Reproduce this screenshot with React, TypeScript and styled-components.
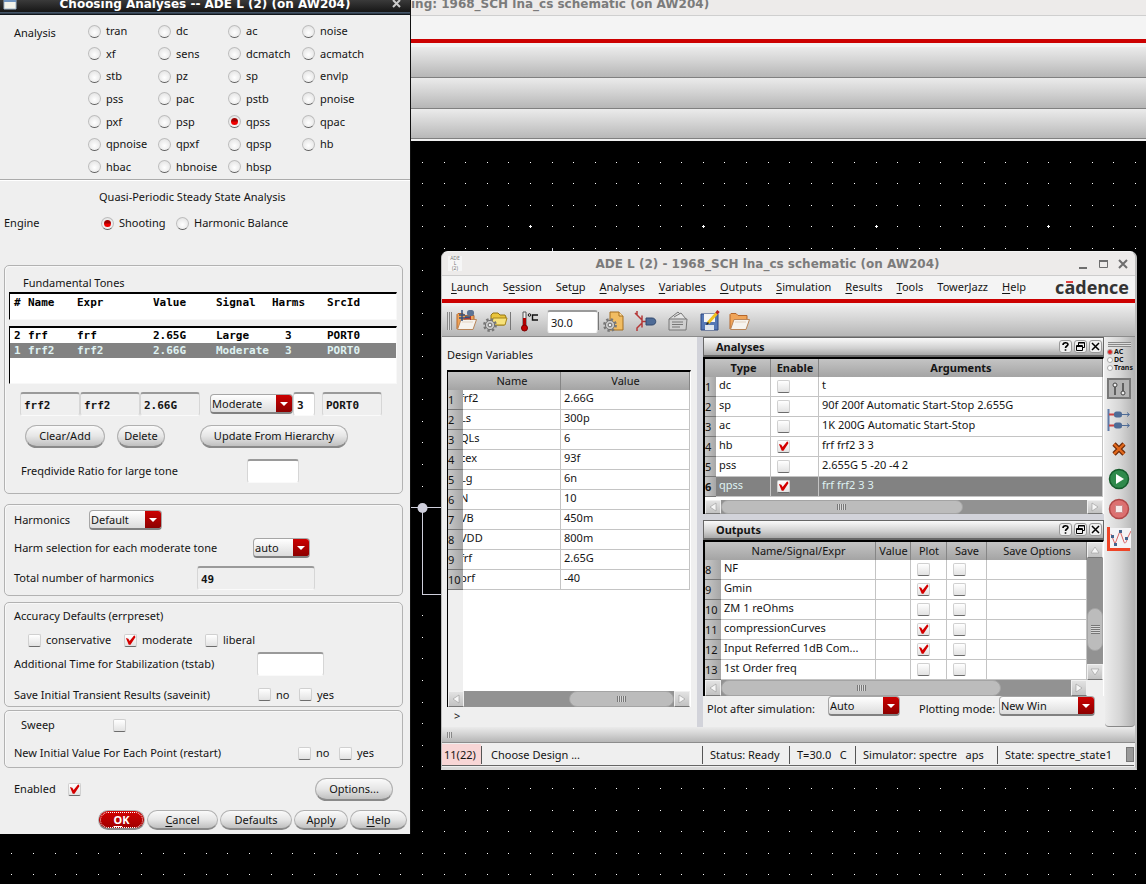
import React from "react";
import styled, { createGlobalStyle, css } from "styled-components";

const SANS = '"Noto Sans", "Open Sans", sans-serif';
const MONO = '"DejaVu Sans Mono", monospace';
const TITLE = '"DejaVu Sans", sans-serif';
const RED = "#cc0000";
const steel = "linear-gradient(#ebebeb, #d4d4d4 45%, #b6b6b6)";

const GlobalStyle = createGlobalStyle`
  * { box-sizing: border-box; }
  html, body { margin: 0; background: #000; }
  body { font: 11px/16px ${SANS}; color: #141414; }
  button, input, select { font: inherit; color: inherit; margin: 0; }
  table { border-collapse: separate; border-spacing: 0; table-layout: fixed; }
  th, td { padding: 0; text-align: left; white-space: nowrap; overflow: hidden; }
  u { text-underline-offset: 2px; }
`;

/* ---------- desktop ---------- */

const Desktop = styled.main`
  position: relative;
  min-height: 100vh;
  overflow: hidden;
  background: #000;
`;
const Canvas = styled.svg`
  position: absolute;
  inset: 0;
  width: 100%;
  height: 100%;
`;

/* ---------- shared controls ---------- */

const Check = styled.input.attrs({ type: "checkbox" })`
  appearance: none;
  flex: none;
  display: block;
  width: 13px;
  height: 13px;
  border-radius: 2px;
  border: 1px solid #d0d0d0;
  border-bottom-color: #6c6c6c;
  background: linear-gradient(#ffffff, #e2e2e2);
  &:checked::after {
    content: "";
    display: block;
    width: 11px;
    height: 11px;
    background: #d40000;
    clip-path: polygon(8% 32%, 30% 38%, 42% 60%, 84% 6%, 96% 22%, 50% 94%, 34% 94%);
  }
`;
const Radio = styled.input.attrs({ type: "radio" })`
  appearance: none;
  flex: none;
  display: block;
  width: 13px;
  height: 13px;
  border-radius: 50%;
  border: 1px solid #bdbdbd;
  border-bottom-color: #5c5c5c;
  background: radial-gradient(circle at 50% 60%, #ffffff, #dedede);
  &:checked::after {
    content: "";
    display: block;
    width: 7px;
    height: 7px;
    margin: 2px;
    border-radius: 50%;
    background: linear-gradient(#a00000 40%, #f00000 60%);
  }
`;
const Choice = styled.label`
  display: flex;
  align-items: center;
  gap: 5px;
  white-space: nowrap;
`;
const Button = styled.button<{ $primary?: boolean; $tall?: boolean }>`
  height: ${(p) => (p.$tall ? 23 : 20)}px;
  padding: 0;
  border: 1px solid #b0b0b0;
  border-bottom: 2px solid #8a8a8a;
  border-radius: 12px;
  background: linear-gradient(#fafafa, #e6e6e6 50%, #c0c0c0);
  line-height: 16px;
  text-align: center;
  white-space: nowrap;
  ${(p) =>
    p.$primary &&
    css`
      background: linear-gradient(#d20000, #a00000);
      color: #fff;
      font-weight: 700;
      outline: 1px dotted #fff;
      outline-offset: -3px;
    `}
`;
const Field = styled.input.attrs({ type: "text" })<{ $flat?: boolean; $mono?: boolean }>`
  width: 100%;
  min-width: 0;
  height: 24px;
  padding: 1px 3px 0;
  border: 1px solid #d6d6d6;
  border-top: 2px solid #9a9a9a;
  border-bottom-color: #fafafa;
  border-radius: 3px;
  background: ${(p) => (p.$flat ? "#efefef" : "#fff")};
  ${(p) => p.$mono && `font: 700 11px/16px ${MONO};`}
`;
const Combo = styled.span`
  position: relative;
  display: block;
  height: 20px;
  border: 1px solid #a6a6a6;
  border-bottom: 2px solid #808080;
  border-radius: 4px;
  overflow: hidden;
  background: linear-gradient(#ffffff, #dcdcdc);
  select {
    appearance: none;
    display: block;
    width: 100%;
    height: 17px;
    padding: 0 17px 0 1px;
    border: 0;
    background: transparent;
    line-height: 16px;
  }
  svg {
    position: absolute;
    top: 0;
    right: 0;
    pointer-events: none;
    background: linear-gradient(${RED}, #8c0000);
  }
`;
function Dropdown({ value, label }: { value: string; label: string }) {
  return (
    <Combo>
      <select aria-label={label} defaultValue={value}>
        <option>{value}</option>
      </select>
      <svg width="16" height="17" viewBox="0 0 16 17">
        <path d="M4 7h8l-4 4z" fill="#fff" />
      </svg>
    </Combo>
  );
}

/* ---------- schematic window behind ---------- */

const Schematic = styled.section`
  margin-left: 411px;
  position: relative;
`;
const SchematicTitle = styled.h2`
  margin: 0;
  height: 16px;
  overflow: hidden;
  background: #edebea;
  border-bottom: 1px solid #cfcfcf;
  font: 700 12px/8px ${TITLE};
  color: #7b7b7b;
  white-space: nowrap;
`;
const SchematicMenu = styled.div`
  height: 31px;
  background: #f4f4f4;
  border-bottom: 4px solid #f2f2f2;
  box-shadow: inset 0 -4px ${RED};
`;
const Band = styled.div`
  height: 31px;
  background: ${steel};
  border-bottom: 1px solid #808080;
  &:last-child {
    border-bottom: 2px solid #f0f0f0;
    box-shadow: inset 0 -1px #808080;
    height: 32px;
  }
`;

/* ---------- analyses dialog ---------- */

const Dialog = styled.section`
  position: absolute;
  top: 0;
  left: 0;
  width: 411px;
  background: #efefef;
  border-right: 1px solid #111;
`;
const DialogTitle = styled.header`
  display: grid;
  grid-template-columns: 22px 1fr 22px;
  align-items: start;
  height: 15px;
  padding: 0 3px;
  overflow: hidden;
  background: linear-gradient(#3a3a3a, #161616 80%, #4d6178 84%, #000);
  color: #fff;
  h1 {
    margin: 0;
    font: 700 12px/8px ${TITLE};
    text-align: center;
    white-space: nowrap;
  }
`;
const AnalysisArea = styled.fieldset`
  margin: 0;
  border: 0;
  display: grid;
  grid-template-columns: 74px 1fr;
  padding: 5px 0 1px 14px;
  border-bottom: 1px solid #ababab;
  box-shadow: 0 1px #fff;
  > span { padding-top: 5px; }
`;
const AnalysisGrid = styled.div`
  display: grid;
  grid-template-columns: 70px 70px 74px 1fr;
  grid-template-rows: repeat(7, 1fr);
  height: 158px;
  ${Choice} { align-self: center; }
`;
const EngineArea = styled.fieldset`
  margin: 0;
  border: 0;
  padding: 9px 0 34px 4px;
`;
const EngineTitle = styled.div`
  padding-left: 95px;
  margin-bottom: 10px;
`;
const EngineRow = styled.div`
  display: grid;
  grid-template-columns: 97px 75px 1fr;
  align-items: center;
`;
const Group = styled.section<{ $h: number; $gap: number }>`
  margin: 0 7px ${(p) => p.$gap}px 4px;
  min-height: ${(p) => p.$h}px;
  border: 1px solid #b2b2b2;
  border-radius: 5px;
  box-shadow: inset 1px 1px #f8f8f8;
`;
const Row = styled.div<{ $cols: string; $h: number; $x?: number; $top?: number }>`
  display: grid;
  grid-template-columns: ${(p) => p.$cols};
  align-items: center;
  min-height: ${(p) => p.$h}px;
  padding-left: ${(p) => p.$x ?? 9}px;
  padding-top: ${(p) => p.$top ?? 0}px;
  white-space: nowrap;
`;
const Legend = styled.div`
  padding: 9px 0 1px 18px;
`;
const ListBox = styled.div<{ $h: number }>`
  height: ${(p) => p.$h}px;
  margin: 0 5px 6px 4px;
  border: 1px solid #f8f8f8;
  border-top: 2px solid #000;
  border-left: 1px solid #000;
  background: #fff;
  table {
    width: 100%;
    font: 700 11px/15px ${MONO};
    color: #000;
  }
  th, td { overflow: visible; padding-top: 0; }
`;
const ToneHead = styled.tr`
  th { line-height: 18px; }
  th:first-child { padding-left: 4px; }
`;
const ToneRow = styled.tr<{ $on?: boolean }>`
  ${(p) => p.$on && "background: #828282; color: #dff2f2;"}
  td { height: 15px; }
  td:first-child { padding-left: 4px; }
  td:nth-child(6) { padding-left: 13px; }
`;
const Actions = styled.div`
  display: grid;
  grid-template-columns: 47px 71px 72px 54px 57px;
  gap: 2px;
  justify-content: end;
  padding: 9px 3px 4px 0;
`;

function ToneCols() {
  return (
    <colgroup>
      {[18, 49, 76, 63, 56, 55].map((w, i) => (
        <col key={i} style={{ width: w }} />
      ))}
      <col />
    </colgroup>
  );
}

const analyses = [
  "tran", "dc", "ac", "noise", "xf", "sens", "dcmatch", "acmatch", "stb", "pz", "sp", "envlp",
  "pss", "pac", "pstb", "pnoise", "pxf", "psp", "qpss", "qpac", "qpnoise", "qpxf", "qpsp", "hb",
  "hbac", "hbnoise", "hbsp",
];

function AnalysesDialog() {
  return (
    <Dialog aria-label="Choosing Analyses">
      <DialogTitle>
        <svg width="14" height="10" viewBox="0 0 14 10">
          <path d="M1 0h12v9H1z" fill="#f2f2ea" stroke="#9db4cc" />
          <path d="M1 0h12v2H1z" fill="#6f94c0" />
        </svg>
        <h1>Choosing Analyses -- ADE L (2) (on AW204)</h1>
        <svg width="22" height="10" viewBox="0 0 22 10">
          <path d="M8 0l7 7M15 0l-7 7" stroke="#ccc" strokeWidth="2" />
        </svg>
      </DialogTitle>

      <AnalysisArea>
        <span>Analysis</span>
        <AnalysisGrid>
          {analyses.map((a) => (
            <Choice key={a}>
              <Radio name="analysis" defaultChecked={a === "qpss"} />
              {a}
            </Choice>
          ))}
        </AnalysisGrid>
      </AnalysisArea>

      <EngineArea>
        <EngineTitle>Quasi-Periodic Steady State Analysis</EngineTitle>
        <EngineRow>
          <span>Engine</span>
          <Choice>
            <Radio name="engine" defaultChecked />
            Shooting
          </Choice>
          <Choice>
            <Radio name="engine" />
            Harmonic Balance
          </Choice>
        </EngineRow>
      </EngineArea>

      <Group $h={229} $gap={10}>
        <Legend>Fundamental Tones</Legend>
        <ListBox $h={28}>
          <table>
            <ToneCols />
            <thead>
              <ToneHead>
                <th>#</th>
                <th>Name</th>
                <th>Expr</th>
                <th>Value</th>
                <th>Signal</th>
                <th>Harms</th>
                <th>SrcId</th>
              </ToneHead>
            </thead>
          </table>
        </ListBox>
        <ListBox $h={58}>
          <table>
            <ToneCols />
            <tbody>
              <ToneRow>
                <td>2</td><td>frf</td><td>frf</td><td>2.65G</td><td>Large</td><td>3</td><td>PORT0</td>
              </ToneRow>
              <ToneRow $on>
                <td>1</td><td>frf2</td><td>frf2</td><td>2.66G</td><td>Moderate</td><td>3</td><td>PORT0</td>
              </ToneRow>
            </tbody>
          </table>
        </ListBox>
        <Row $h={28} $x={15} $cols="60px 60px 60px 10px 83px 22px 7px 60px">
          <Field $flat $mono aria-label="Name" defaultValue="frf2" />
          <Field $flat $mono aria-label="Expr" defaultValue="frf2" />
          <Field $flat $mono aria-label="Value" defaultValue="2.66G" />
          <span />
          <Dropdown label="Signal" value="Moderate" />
          <Field $mono aria-label="Harms" defaultValue="3" />
          <span />
          <Field $flat $mono aria-label="SrcId" defaultValue="PORT0" />
        </Row>
        <Row $h={36} $x={20} $cols="80px 12px 48px 35px 148px">
          <Button $tall>Clear/Add</Button>
          <span />
          <Button $tall>Delete</Button>
          <span />
          <Button $tall>Update From Hierarchy</Button>
        </Row>
        <Row $h={34} $x={16} $cols="226px 52px">
          <label htmlFor="ratio">Freqdivide Ratio for large tone</label>
          <Field id="ratio" />
        </Row>
      </Group>

      <Group $h={92} $gap={6}>
        <Row $h={30} $cols="75px 73px">
          <span>Harmonics</span>
          <Dropdown label="Harmonics" value="Default" />
        </Row>
        <Row $h={26} $cols="239px 57px">
          <span>Harm selection for each moderate tone</span>
          <Dropdown label="Harm selection" value="auto" />
        </Row>
        <Row $h={34} $cols="183px 118px">
          <label htmlFor="total">Total number of harmonics</label>
          <Field id="total" $flat $mono defaultValue="49" />
        </Row>
      </Group>

      <Group $h={105} $gap={3}>
        <Row $h={26} $cols="1fr">Accuracy Defaults (errpreset)</Row>
        <Row $h={22} $x={23} $cols="96px 81px 1fr">
          <Choice><Check />conservative</Choice>
          <Choice><Check defaultChecked />moderate</Choice>
          <Choice><Check />liberal</Choice>
        </Row>
        <Row $h={26} $cols="243px 67px">
          <label htmlFor="tstab">Additional Time for Stabilization (tstab)</label>
          <Field id="tstab" />
        </Row>
        <Row $h={29} $top={6} $cols="244px 41px 1fr">
          <span>Save Initial Transient Results (saveinit)</span>
          <Choice><Check />no</Choice>
          <Choice><Check />yes</Choice>
        </Row>
      </Group>

      <Group $h={58} $gap={9}>
        <Row $h={28} $x={16} $cols="92px 13px">
          <label htmlFor="sweep">Sweep</label>
          <Check id="sweep" />
        </Row>
        <Row $h={28} $cols="284px 41px 1fr">
          <span>New Initial Value For Each Point (restart)</span>
          <Choice><Check />no</Choice>
          <Choice><Check />yes</Choice>
        </Row>
      </Group>

      <Row $h={24} $x={14} $cols="54px 13px 1fr 78px 17px">
        <label htmlFor="enabled">Enabled</label>
        <Check id="enabled" defaultChecked />
        <span />
        <Button $tall>Options...</Button>
      </Row>
      <Actions>
        <Button $primary><u>O</u>K</Button>
        <Button><u>C</u>ancel</Button>
        <Button>Defaults</Button>
        <Button>Apply</Button>
        <Button><u>H</u>elp</Button>
      </Actions>
    </Dialog>
  );
}

/* ---------- ADE window ---------- */

const Ade = styled.section`
  position: absolute;
  top: 251px;
  left: 441px;
  right: 9px;
  border: 1px solid #b4b4b4;
  border-width: 1px 2px 3px 1px;
  border-color: #f4f4f4 #bdbdbd #d8d8d8;
  border-radius: 7px 7px 0 0;
  background: #efefef;
  overflow: hidden;
`;
const AdeTitle = styled.header`
  display: grid;
  grid-template-columns: 22px 1fr 64px;
  align-items: center;
  height: 24px;
  background: #edebea;
  border-bottom: 1px solid #cdcdcd;
  h2 {
    margin: 0;
    font: 700 12px/16px ${TITLE};
    color: #7b7b7b;
    text-align: center;
    white-space: nowrap;
  }
`;
const AdeBadge = styled.span`
  width: 14px;
  margin-left: 6px;
  background: #f6f6f6;
  font: 5px/5px ${SANS};
  color: #777;
  text-align: center;
`;
const MenuBar = styled.nav`
  display: flex;
  align-items: center;
  gap: 14px;
  height: 27px;
  padding: 0 6px 1px 9px;
  background: #f4f4f4;
  border-bottom: 4px solid ${RED};
  a { color: inherit; text-decoration: none; }
`;
const Logo = styled.span`
  margin-left: auto;
  font: 700 18px/18px "Open Sans", ${SANS};
  color: #333;
  i { position: relative; font-style: normal; }
  i::before {
    content: "";
    position: absolute;
    left: 2px;
    right: 2px;
    top: 6px;
    height: 2px;
    background: #e04040;
  }
`;
const ToolBar = styled.div`
  display: flex;
  align-items: center;
  height: 31px;
  margin-top: 3px;
  padding-left: 5px;
  background: ${steel};
  border-bottom: 1px solid #8c8c8c;
`;
const Tool = styled.button<{ $w: number }>`
  flex: none;
  display: grid;
  place-items: center;
  width: ${(p) => p.$w}px;
  height: 26px;
  padding: 0;
  border: 0;
  background: none;
`;
const Sep = styled.span`
  width: 1px;
  height: 18px;
  background: #777;
`;
const Grip = styled.span<{ $vertical?: boolean }>`
  width: ${(p) => (p.$vertical ? 23 : 5)}px;
  height: ${(p) => (p.$vertical ? 5 : 18)}px;
  background: repeating-linear-gradient(
    ${(p) => (p.$vertical ? "180deg" : "90deg")},
    #888 0 1px,
    #ddd 1px 2px
  );
`;
const TempField = styled(Field)`
  width: 51px;
  height: 23px;
`;
const AdeBody = styled.div`
  display: grid;
  grid-template-columns: 255px 6px minmax(0, 1fr) 31px;
  height: 390px;
`;
const Splitter = styled.div`
  background: #d2d3da;
`;
const VarPane = styled.div`
  padding: 10px 6px 0 5px;
`;
const Sunken = styled.div<{ $h: number }>`
  display: flex;
  flex-direction: column;
  height: ${(p) => p.$h}px;
  border-top: 2px solid #000;
  border-left: 2px solid #000;
  border-right: 1px solid #fff;
  background: #fff;
`;
const VarBox = styled(Sunken)`
  margin-top: 7px;
  border-left-width: 1px;
`;
const Grow = styled.div<{ $stub?: number }>`
  flex: 1;
  min-height: 0;
  background: linear-gradient(90deg, #efefef ${(p) => p.$stub ?? 0}px, #fff 0);
`;
const Sheet = styled.table<{ $bold?: boolean }>`
  width: 100%;
  thead th {
    height: 18px;
    background: linear-gradient(#c4c4c4, #a4a4a4);
    box-shadow: inset -1px 0 #858585;
    text-align: center;
    line-height: 16px;
    font-weight: ${(p) => (p.$bold ? 700 : 400)};
  }
  thead th:first-child { box-shadow: none; }
  tbody td {
    height: 20px;
    padding: 0 2px 3px 3px;
    border-right: 1px solid #c4c4c4;
    border-bottom: 1px solid #c4c4c4;
    line-height: 16px;
  }
  tbody th {
    height: 20px;
    padding: 1px 0 0;
    background: linear-gradient(90deg, #c8c8c8, #a6a6a6);
    border-bottom: 1px solid #777;
    font-weight: 400;
    line-height: 16px;
  }
  tbody td input { margin: 2px 0 0 3px; }
`;
const SheetRow = styled.tr<{ $on?: boolean }>`
  ${(p) => p.$on && "td { background: #828282; color: #dff2f2; } && th { font-weight: 700; }"}
`;
const Clipped = styled.span`
  display: block;
  margin-left: -6px;
`;
const Prompt = styled.div`
  padding: 1px 7px;
`;
const HBar = styled.div<{ $h: number }>`
  flex: none;
  display: grid;
  grid-template-columns: 16px minmax(0, 1fr) 16px;
  height: ${(p) => p.$h}px;
  background: #929292;
`;
const ScrollButton = styled.button`
  display: grid;
  place-items: center;
  padding: 0;
  border: 1px solid #f0f0f0;
  border-bottom-color: #777;
  background: linear-gradient(#e2e2e2, #c2c2c2);
  overflow: hidden;
`;
const Track = styled.div`
  display: flex;
  background: #929292;
`;
const Thumb = styled.span`
  display: grid;
  place-items: center;
  border: 1px solid #a4a4a4;
  border-radius: 8px;
  background: #bcbcbc;
`;
const ThumbGrip = styled.span<{ $vertical?: boolean }>`
  width: 9px;
  height: ${(p) => (p.$vertical ? 9 : 6)}px;
  background: repeating-linear-gradient(
    ${(p) => (p.$vertical ? "180deg" : "90deg")},
    #777 0 1px,
    #d8d8d8 1px 2px
  );
`;

const arrows = {
  left: "M8 1L2 5l6 4z",
  right: "M2 1l6 4-6 4z",
  up: "M1 8L5 2l4 6z",
  down: "M1 2h8L5 8z",
};
function Arrow({ dir }: { dir: keyof typeof arrows }) {
  return (
    <ScrollButton aria-label={`Scroll ${dir}`}>
      <svg width="10" height="10" viewBox="0 0 10 10">
        <path d={arrows[dir]} fill="#f6f6f6" stroke="#999" strokeWidth=".6" />
      </svg>
    </ScrollButton>
  );
}
function ScrollBar({ h, start, size }: { h: number; start: string; size: string }) {
  return (
    <HBar $h={h}>
      <Arrow dir="left" />
      <Track>
        <Thumb style={{ marginLeft: start, width: size }}>
          <ThumbGrip />
        </Thumb>
      </Track>
      <Arrow dir="right" />
    </HBar>
  );
}

const RightPane = styled.div`
  display: flex;
  flex-direction: column;
`;
const PaneTitle = styled.header`
  flex: none;
  display: flex;
  align-items: center;
  gap: 2px;
  height: 20px;
  padding: 0 1px 0 12px;
  border: 1px solid #666;
  border-bottom-width: 2px;
  background: linear-gradient(#fafafa, #d0d0d0 60%, #a8a8a8);
  h3 { margin: 0 auto 0 0; font: 700 11px/16px ${SANS}; }
`;
const PaneButton = styled.button`
  display: grid;
  place-items: center;
  width: 13px;
  height: 13px;
  padding: 0;
  border: 1px solid #999;
  border-radius: 3px;
  background: #f0f0f0;
`;
function PaneHead({ title }: { title: string }) {
  return (
    <PaneTitle>
      <h3>{title}</h3>
      <PaneButton aria-label="Help">
        <svg width="11" height="11" viewBox="0 0 11 11" fill="none" stroke="#000" strokeWidth="1.6">
          <path d="M3 4c0-3 5-3 5-.5C8 5 5.500 5 5.500 7M5.500 8.200v1.600" />
        </svg>
      </PaneButton>
      <PaneButton aria-label="Detach">
        <svg width="11" height="11" viewBox="0 0 11 11" fill="none" stroke="#000">
          <path d="M3.500 4V1.500h6v5H7.500M3.500 2h6M1.500 4.500h6v5h-6zM1.500 5.500h6" />
        </svg>
      </PaneButton>
      <PaneButton aria-label="Close">
        <svg width="11" height="11" viewBox="0 0 11 11" fill="none" stroke="#000" strokeWidth="1.500">
          <path d="M2 2l7 7M9 2l-7 7" />
        </svg>
      </PaneButton>
    </PaneTitle>
  );
}
const VSplit = styled.div`
  flex: none;
  height: 6px;
  background: #d2d3da;
`;
const OutputsArea = styled.div`
  display: grid;
  grid-template-columns: minmax(0, 1fr) 16px;
`;
const VBar = styled.div`
  display: grid;
  grid-template-rows: 16px 1fr 16px;
  background: #929292;
`;
const VTrack = styled.div`
  display: flex;
  flex-direction: column;
  ${Thumb} { height: 43px; margin-top: 50px; }
`;
const Corner = styled.div`
  display: grid;
  grid-template-columns: minmax(0, 1fr) 16px;
  background: #efefef;
`;
const PlotRow = styled.div`
  display: grid;
  grid-template-columns: 121px 72px 1fr 80px 96px 9px;
  padding-left: 4px;
  white-space: nowrap;
  > span:not(${Combo}) { padding-top: 5px; }
`;
const SideBar = styled.aside`
  display: flex;
  flex-direction: column;
  align-items: center;
  padding: 5px 2px 0 0;
  margin-left: 1px;
  border-bottom: 1px solid #888;
  border-radius: 0 0 4px 4px;
  background: linear-gradient(90deg, #ececec, #d6d6d6 50%, #b2b2b2);
`;
const ModeKeys = styled.div`
  margin-top: 1px;
  align-self: stretch;
  padding-left: 2px;
  font: 700 7px/8px ${SANS};
  div { display: flex; align-items: center; gap: 1px; height: 8px; }
`;
const ModeDot = styled.span<{ $on?: boolean }>`
  width: 6px;
  height: 6px;
  border-radius: 50%;
  border: 1px solid #aaa;
  background: ${(p) => (p.$on ? "#d22" : "#fff")};
`;
const SideTool = styled.button<{ $h: number }>`
  display: grid;
  place-items: center;
  width: 26px;
  height: ${(p) => p.$h}px;
  padding: 0;
  border: 0;
  background: none;
`;
const LowerBar = styled.div`
  display: flex;
  align-items: center;
  height: 16px;
  padding-left: 5px;
  background: ${steel};
  border-bottom: 1px solid #8c8c8c;
  ${Grip} { height: 6px; }
`;
const StatusBar = styled.footer`
  display: grid;
  grid-template-columns: 39px 1fr 87px 66px 142px 129px 8px;
  align-items: center;
  height: 22px;
  margin: 1px 1px 1px 0;
  border-bottom: 1px solid #666;
  white-space: pre;
  span { padding-left: 7px; border-left: 1px solid #555; line-height: 18px; }
  span:first-child { padding-left: 2px; border: 0; background: #f8d6d6; line-height: 21px; }
  span:nth-child(2) { padding-left: 9px; }
  i { height: 15px; background: #999; border: 1px solid #777; }
`;

const Gear = ({ x, y }: { x: number; y: number }) => (
  <g transform={`translate(${x} ${y})`}>
    <circle r="5.600" fill="none" stroke="#777" strokeWidth="2.600" strokeDasharray="2.300 2.100" />
    <circle r="4.600" fill="#c9c9c9" stroke="#707070" />
    <circle r="1.900" fill="#eee" stroke="#666" />
  </g>
);
const OpenFolder = () => (
  <g>
    <path d="M2 19V4.500l1-1h5l2 2h9v4" fill="#f0a458" stroke="#b5662a" />
    <path d="M6 9.500h15.500l-3.500 10H2.500z" fill="#f6f3ee" stroke="#b98558" />
    <path d="M7 12h11" stroke="#e3d3c2" />
  </g>
);
const Ico = ({ children }: { children: React.ReactNode }) => (
  <svg width="23" height="23" viewBox="0 0 23 23" fill="none">
    {children}
  </svg>
);

const menus: [string, string, string][] = [
  ["", "L", "aunch"], ["S", "e", "ssion"], ["Set", "u", "p"], ["", "A", "nalyses"],
  ["", "V", "ariables"], ["", "O", "utputs"], ["", "S", "imulation"], ["", "R", "esults"],
  ["", "T", "ools"], ["TowerJazz", "", ""], ["", "H", "elp"],
];
const variables = [
  ["frf2", "2.66G"], ["Ls", "300p"], ["QLs", "6"], ["cex", "93f"], ["Lg", "6n"],
  ["N", "10"], ["VB", "450m"], ["VDD", "800m"], ["frf", "2.65G"], ["prf", "-40"],
];
const runs: [string, boolean, string][] = [
  ["dc", false, "t"],
  ["sp", false, "90f 200f Automatic Start-Stop 2.655G"],
  ["ac", false, "1K 200G Automatic Start-Stop"],
  ["hb", true, "frf frf2 3 3"],
  ["pss", false, "2.655G 5 -20 -4 2"],
  ["qpss", true, "frf frf2 3 3"],
];
const outputs: [number, string, boolean][] = [
  [8, "NF", false], [9, "Gmin", true], [10, "ZM 1 reOhms", false],
  [11, "compressionCurves", true], [12, "Input Referred 1dB Com...", true], [13, "1st Order freq", false],
];

function AdeWindow() {
  return (
    <Ade aria-label="ADE L">
      <AdeTitle>
        <AdeBadge>ADE<br />L<br />(2)</AdeBadge>
        <h2>ADE L (2) - 1968_SCH lna_cs schematic (on AW204)</h2>
        <svg width="64" height="16" viewBox="0 0 64 16" fill="none" stroke="#6e6e6e" strokeWidth="2">
          <path d="M8 12h8" />
          <path d="M28.500 4.500h8v7h-8z" strokeWidth="1" />
          <path d="M28 5h9" />
          <path d="M48 4l8 8M56 4l-8 8" />
        </svg>
      </AdeTitle>
      <MenuBar>
        {menus.map(([a, k, b]) => (
          <a href="#" key={a + k + b}>
            {a}
            <u>{k}</u>
            {b}
          </a>
        ))}
        <Logo>c<i>a</i>dence</Logo>
      </MenuBar>
      <ToolBar>
        <Grip />
        <Tool $w={28} aria-label="Set up design">
          <Ico>
            <OpenFolder />
            <path d="M7 0v11M4 5h6M4 8h6M10 7h5M7 8h9" stroke="#35507c" strokeWidth="1.500" />
            <rect x="12" y="0" width="7" height="6" rx="2.500" fill="#5d7394" />
            <path d="M15.500 6v4M9 9l7-1" stroke="#a33" />
          </Ico>
        </Tool>
        <Tool $w={30} aria-label="Model libraries">
          <svg width="25" height="23" viewBox="0 0 25 23" fill="none">
            <path d="M8 5l2-2h5l2 2h5l1 2-2 8H8z" fill="#e9c43c" stroke="#927414" />
            <path d="M10 8h14l-2 7H8z" fill="#f7e27a" stroke="#a48318" />
            <Gear x={7} y={15} />
          </svg>
        </Tool>
        <Sep />
        <Tool $w={36} aria-label="Temperature">
          <svg width="20" height="23" viewBox="0 0 20 23" fill="none">
            <path d="M4 2h3v13H4z" fill="#f4f4f4" stroke="#555" />
            <path d="M4 8h3v9H4z" fill="#b10000" />
            <circle cx="5.500" cy="18" r="3" fill="#c40000" stroke="#700" />
            <circle cx="10.500" cy="5" r="1.300" stroke="#111" />
            <path d="M19 5h-5.500v5H19" stroke="#111" strokeWidth="1.400" />
          </svg>
        </Tool>
        <TempField aria-label="Temperature" defaultValue="30.0" />
        <Sep />
        <Tool $w={30} aria-label="Simulation options">
          <Ico>
            <path d="M7 2h9l4 4v14H7z" fill="#f1bd62" stroke="#a46f20" />
            <path d="M16 2v4h4" fill="#fbe0a8" stroke="#a46f20" />
            <Gear x={7} y={15} />
          </Ico>
        </Tool>
        <Tool $w={32} aria-label="Choose analyses">
          <Ico>
            <path d="M3 1v4l5 5v3l-5 5v3M8 5.500v12M8 11.500h5M3 5l-2-2" stroke="#b53838" strokeWidth="1.500" />
            <path d="M12 8h6c5 0 5 7 0 7h-6z" fill="#4e6b96" stroke="#31496e" />
          </Ico>
        </Tool>
        <Tool $w={32} aria-label="Outputs">
          <Ico>
            <path d="M3 9l9-7 6 6" fill="#ddd" stroke="#777" />
            <path d="M8 7l7-4 5 6" fill="#e6e6e6" stroke="#777" />
            <path d="M3 9h18l-1 11H3z" fill="#cfcfcf" stroke="#777" />
            <path d="M6 12h11M6 14.500h11M6 17h8" stroke="#777" />
          </Ico>
        </Tool>
        <Tool $w={32} aria-label="Save state">
          <Ico>
            <path d="M3 4h17v16H3z" fill="#5577b5" stroke="#2c4780" />
            <path d="M6 4h11v8H6z" fill="#f4f4f4" />
            <path d="M7 15h9v5H7z" fill="#dfe5ee" />
            <path d="M10 13l9-10" stroke="#f0c020" strokeWidth="3" />
            <path d="M18.500 3.500l2-2.500" stroke="#b22" strokeWidth="3" />
            <path d="M8.500 14.500l2-2" stroke="#222" strokeWidth="1.500" />
          </Ico>
        </Tool>
        <Tool $w={28} aria-label="Load state">
          <Ico><OpenFolder /></Ico>
        </Tool>
      </ToolBar>

      <AdeBody>
        <VarPane>
          Design Variables
          <VarBox $h={337}>
            <Sheet>
              <colgroup>
                <col style={{ width: 15 }} />
                <col style={{ width: 98 }} />
                <col />
              </colgroup>
              <thead>
                <tr><th /><th>Name</th><th>Value</th></tr>
              </thead>
              <tbody>
                {variables.map(([n, v], i) => (
                  <SheetRow key={n}>
                    <th>{i + 1}</th>
                    <td><Clipped>{n}</Clipped></td>
                    <td>{v}</td>
                  </SheetRow>
                ))}
              </tbody>
            </Sheet>
            <Grow $stub={15} />
            <ScrollBar h={16} start="50%" size="50%" />
          </VarBox>
          <Prompt>&gt;</Prompt>
        </VarPane>
        <Splitter />
        <RightPane>
          <PaneHead title="Analyses" />
          <Sunken $h={157}>
            <Sheet $bold>
              <colgroup>
                <col style={{ width: 11 }} />
                <col style={{ width: 55 }} />
                <col style={{ width: 48 }} />
                <col />
              </colgroup>
              <thead>
                <tr><th /><th>Type</th><th>Enable</th><th>Arguments</th></tr>
              </thead>
              <tbody>
                {runs.map(([n, on, args], i) => (
                  <SheetRow key={n} $on={n === "qpss"}>
                    <th>{i + 1}</th>
                    <td>{n}</td>
                    <td><Check aria-label={`Enable ${n}`} defaultChecked={on} /></td>
                    <td>{args}</td>
                  </SheetRow>
                ))}
              </tbody>
            </Sheet>
            <Grow />
            <ScrollBar h={14} start="0" size="66%" />
          </Sunken>
          <VSplit />
          <PaneHead title="Outputs" />
          <Sunken $h={156}>
            <OutputsArea>
              <Sheet>
                <colgroup>
                  <col style={{ width: 16 }} />
                  <col style={{ width: 155 }} />
                  <col style={{ width: 35 }} />
                  <col style={{ width: 36 }} />
                  <col style={{ width: 40 }} />
                  <col />
                </colgroup>
                <thead>
                  <tr><th /><th>Name/Signal/Expr</th><th>Value</th><th>Plot</th><th>Save</th><th>Save Options</th></tr>
                </thead>
                <tbody>
                  {outputs.map(([i, n, plot]) => (
                    <SheetRow key={n}>
                      <th>{i}</th>
                      <td>{n}</td>
                      <td />
                      <td><Check aria-label={`Plot ${n}`} defaultChecked={plot} /></td>
                      <td><Check aria-label={`Save ${n}`} /></td>
                      <td />
                    </SheetRow>
                  ))}
                </tbody>
              </Sheet>
              <VBar>
                <Arrow dir="up" />
                <VTrack>
                  <Thumb><ThumbGrip $vertical /></Thumb>
                </VTrack>
                <Arrow dir="down" />
              </VBar>
            </OutputsArea>
            <Corner>
              <ScrollBar h={16} start="0" size="80%" />
            </Corner>
          </Sunken>
          <PlotRow>
            <span>Plot after simulation:</span>
            <Dropdown label="Plot after simulation" value="Auto" />
            <span />
            <span>Plotting mode:</span>
            <Dropdown label="Plotting mode" value="New Win" />
          </PlotRow>
        </RightPane>
        <SideBar>
          <Grip $vertical />
          <ModeKeys>
            <div><ModeDot $on />AC</div>
            <div><ModeDot />DC</div>
            <div><ModeDot />Trans</div>
          </ModeKeys>
          <SideTool $h={34} aria-label="Edit variables">
            <svg width="24" height="22" viewBox="0 0 24 22" fill="none">
              <path d="M1 1h22v19H1z" fill="#b4b4b4" stroke="#777" strokeWidth="2" />
              <path d="M8 5v12M16 5v12" stroke="#444" strokeWidth="1.500" />
              <circle cx="8" cy="7" r="2" fill="#eee" stroke="#444" />
              <circle cx="16" cy="15" r="2" fill="#eee" stroke="#444" />
            </svg>
          </SideTool>
          <SideTool $h={28} aria-label="Edit outputs">
            <svg width="24" height="24" viewBox="0 0 24 24" fill="none">
              <path d="M1.500 1v22" stroke="#5f79a5" strokeWidth="2" />
              <path d="M2 6.500h6M2 17.500h6" stroke="#c44" strokeWidth="2" />
              <rect x="7" y="3.500" width="8" height="6" rx="2.500" fill="#4e6b96" />
              <rect x="7" y="14.500" width="8" height="6" rx="2.500" fill="#4e6b96" />
              <path d="M15 6.500h7M20 4.500l2.500 2-2.500 2M15 17.500h7M20 15.500l2.500 2-2.500 2" stroke="#4e6b96" />
            </svg>
          </SideTool>
          <SideTool $h={30} aria-label="Delete">
            <svg width="16" height="16" viewBox="0 0 16 16" fill="none">
              <path d="M3 3l10 10M13 3L3 13" stroke="#702c0a" strokeWidth="4.600" />
              <path d="M3 3l10 10M13 3L3 13" stroke="#e2681c" strokeWidth="2.400" />
            </svg>
          </SideTool>
          <SideTool $h={30} aria-label="Run">
            <svg width="22" height="22" viewBox="0 0 22 22">
              <circle cx="11" cy="11" r="9.500" fill="#2f8a4c" stroke="#155c2c" strokeWidth="1.500" />
              <path d="M8 6l8 5-8 5z" fill="#fff" />
            </svg>
          </SideTool>
          <SideTool $h={30} aria-label="Stop">
            <svg width="22" height="22" viewBox="0 0 22 22">
              <circle cx="11" cy="11" r="9.500" fill="#dc7070" stroke="#b04848" strokeWidth="1.500" />
              <path d="M7.500 7.500h7v7h-7z" fill="#f6eaea" stroke="#c88" />
            </svg>
          </SideTool>
          <SideTool $h={30} aria-label="Plot">
            <svg width="24" height="24" viewBox="0 0 24 24" fill="none">
              <path d="M2 1h22v20H2z" fill="#f4f4f6" />
              <path d="M1.500 0v22.500H23" stroke="#ee4426" strokeWidth="3" />
              <path d="M4 7l4 10 5-13 4 11c1 3 3-1 3-3l4-8" stroke="#d66" />
              <path d="M4 8h3v3H4zM7 16h3v3H7zM12 3h3v3h-3zM18 10h3v3h-3z" fill="#46658f" />
            </svg>
          </SideTool>
        </SideBar>
      </AdeBody>
      <LowerBar><Grip /></LowerBar>
      <StatusBar>
        <span>11(22)</span>
        <span>Choose Design ...</span>
        <span>Status: Ready</span>
        <span>T=30.0   C</span>
        <span>Simulator: spectre   aps</span>
        <span>State: spectre_state1</span>
        <i />
      </StatusBar>
    </Ade>
  );
}

/* ---------- schematic canvas ---------- */

function Grid() {
  const dots: React.ReactNode[] = [];
  for (let i = -19; i < 90; i++) {
    for (let j = 0; j < 60; j++) {
      const x = Math.floor(422.4 + i * 21.6);
      const y = Math.floor(162 + j * 21.6);
      dots.push(<rect key={`${i},${j}`} x={x} y={y} width="1" height="1" />);
      if ((i + 19) % 8 === 0 && j % 8 === 3) {
        dots.push(<path key={`c${i},${j}`} d={`M${x - 1} ${y}h3v1h-3zM${x} ${y - 1}h1v3h-1z`} />);
      }
    }
  }
  return (
    <Canvas aria-hidden="true">
      <g fill="#fff">{dots}</g>
      <path d="M411 507.500h30M422.500 508v86.500H441M552.500 248v4" fill="none" stroke="#cfcfdc" />
      <circle cx="422.500" cy="508" r="5" fill="#cfcfdc" />
    </Canvas>
  );
}

export default function App() {
  return (
    <Desktop>
      <GlobalStyle />
      <Grid />
      <Schematic>
        <SchematicTitle>ing: 1968_SCH lna_cs schematic (on AW204)</SchematicTitle>
        <SchematicMenu />
        <Band />
        <Band />
        <Band />
      </Schematic>
      <AnalysesDialog />
      <AdeWindow />
    </Desktop>
  );
}
